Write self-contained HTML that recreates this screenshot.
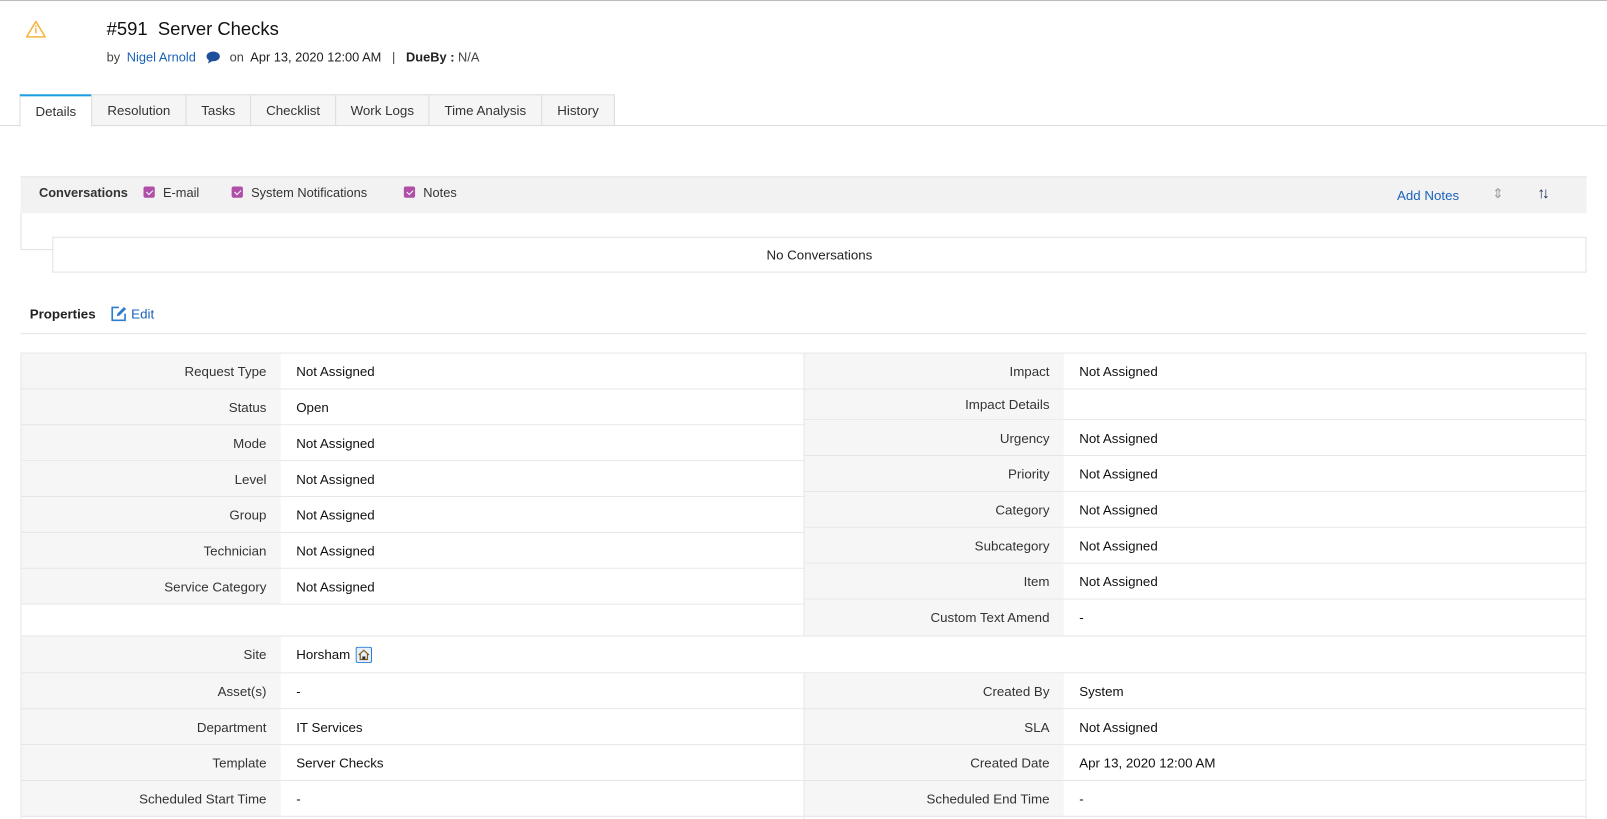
<!DOCTYPE html>
<html><head><meta charset="utf-8"><style>
*{margin:0;padding:0;box-sizing:border-box}
body{width:1607px;height:799px;overflow:hidden;background:#fff;font-family:"Liberation Sans",Arial,sans-serif;font-size:13px;color:#333;position:relative}
#w{position:absolute;left:0;top:0;width:1568px;height:780px;transform:scale(1.0249);transform-origin:0 0}
.a{position:absolute}
.lab{position:absolute;background:#f6f6f6;text-align:right;padding-right:14px;color:#333;border-bottom:1px solid #e6e6e6;display:flex;align-items:center;justify-content:flex-end}
.val{position:absolute;background:#fff;padding-left:15px;color:#111;border-bottom:1px solid #e6e6e6;display:flex;align-items:center}
.tab{position:absolute;top:92px;height:31px;border:1px solid #ddd;background:#f5f5f5;color:#333;font-size:13px;display:flex;align-items:center;justify-content:center}
.cb{display:inline-block;width:11px;height:11px;background:#b04fa8;border-radius:2px;vertical-align:-1px;margin-right:8px;position:relative}
.cb:after{content:"";position:absolute;left:3.5px;top:1.5px;width:3px;height:5px;border:solid #fff;border-width:0 1.3px 1.3px 0;transform:rotate(45deg)}
</style></head><body><div id="w">
<div class="a" style="left:0;top:0;width:1607px;height:1px;background:#bbb"></div>
<svg class="a" style="left:24px;top:19px" width="22" height="19" viewBox="0 0 22 19"><path d="M11 2 L20 17 L2 17 Z" fill="none" stroke="#f7b23b" stroke-width="1.5" stroke-linejoin="round"/><line x1="11" y1="8.5" x2="11" y2="13.5" stroke="#f7b23b" stroke-width="1.5"/><circle cx="11" cy="6.5" r="0.9" fill="#f7b23b"/></svg>
<div class="a" style="left:104px;top:18px;font-size:18px;color:#111">#591&nbsp; Server Checks</div>
<div class="a" style="left:104px;top:49px;font-size:12.5px;color:#444">by <span style="color:#1a63b8;margin-left:3px">Nigel Arnold</span>
<svg width="14" height="12" viewBox="0 0 14 12" style="vertical-align:-2px;margin:0 6px 0 6px"><ellipse cx="7" cy="5" rx="6.5" ry="4.8" fill="#1e4f9a"/><path d="M3 8 L2 12 L7 9Z" fill="#1e4f9a"/></svg> on&nbsp; <span style="color:#222">Apr 13, 2020 12:00 AM</span> &nbsp; | &nbsp; <b style="color:#222">DueBy :</b> N/A</div>
<div class="a" style="left:0;top:122px;width:1607px;height:1px;background:#ddd"></div>
<div class="tab" style="left:19px;width:71px;background:#fff;border-top:2px solid #1a9de0;border-bottom:1px solid #fff;height:32px">Details</div>
<div class="tab" style="left:89px;width:93px">Resolution</div>
<div class="tab" style="left:181px;width:64px">Tasks</div>
<div class="tab" style="left:244px;width:84px">Checklist</div>
<div class="tab" style="left:327px;width:92px">Work Logs</div>
<div class="tab" style="left:418px;width:111px">Time Analysis</div>
<div class="tab" style="left:528px;width:72px">History</div>

<div class="a" style="left:20px;top:172px;width:1528px;height:36px;background:#f2f2f2;border-top:1px solid #e4e4e4"></div>
<div class="a" style="left:38px;top:181px;font-weight:bold;color:#333;font-size:12.5px">Conversations</div>
<div class="a" style="left:140px;top:181px;font-size:12.5px"><span class="cb"></span>E-mail</div>
<div class="a" style="left:226px;top:181px;font-size:12.5px"><span class="cb"></span>System Notifications</div>
<div class="a" style="left:394px;top:181px;font-size:12.5px"><span class="cb"></span>Notes</div>
<div class="a" style="left:1363px;top:183px;color:#1a63b8;font-size:13px">Add Notes</div>
<div class="a" style="left:1456px;top:181px;color:#999;font-size:13px">⇕</div>
<div class="a" style="left:1500px;top:180px;color:#1e2a60;font-size:15px">↑<span style="margin-left:-3px">↓</span></div>
<div class="a" style="left:20px;top:208px;width:32px;border-left:1px solid #e2e2e2;border-bottom:1px solid #e2e2e2;height:36px"></div>
<div class="a" style="left:51px;top:231px;width:1497px;height:35px;border:1px solid #e2e2e2;display:flex;align-items:center;justify-content:center;color:#222">No Conversations</div>

<div class="a" style="left:29px;top:299px;font-weight:bold;color:#222">Properties</div>
<svg class="a" style="left:108px;top:298px" width="16" height="16" viewBox="0 0 16 16"><path d="M8 2H1.5V14.5H14V8" fill="none" stroke="#2b7dd1" stroke-width="1.6"/><path d="M6 10.5L6.5 8 13 1.5 15 3.5 8.5 10Z" fill="#2b7dd1"/></svg>
<div class="a" style="left:128px;top:299px;color:#1a63b8">Edit</div>
<div class="a" style="left:20px;top:325px;width:1528px;height:1px;background:#e6e6e6"></div>

<div class="a" style="left:20px;top:344px;width:1528px;height:455px;border:1px solid #e6e6e6;border-bottom:none"></div>

<div class="lab" style="left:21px;top:345px;width:253px;height:35px">Request Type</div><div class="val" style="left:274px;top:345px;width:510px;height:35px">Not Assigned</div>
<div class="lab" style="left:21px;top:380px;width:253px;height:35px">Status</div><div class="val" style="left:274px;top:380px;width:510px;height:35px">Open</div>
<div class="lab" style="left:21px;top:415px;width:253px;height:35px">Mode</div><div class="val" style="left:274px;top:415px;width:510px;height:35px">Not Assigned</div>
<div class="lab" style="left:21px;top:450px;width:253px;height:35px">Level</div><div class="val" style="left:274px;top:450px;width:510px;height:35px">Not Assigned</div>
<div class="lab" style="left:21px;top:485px;width:253px;height:35px">Group</div><div class="val" style="left:274px;top:485px;width:510px;height:35px">Not Assigned</div>
<div class="lab" style="left:21px;top:520px;width:253px;height:35px">Technician</div><div class="val" style="left:274px;top:520px;width:510px;height:35px">Not Assigned</div>
<div class="lab" style="left:21px;top:555px;width:253px;height:35px">Service Category</div><div class="val" style="left:274px;top:555px;width:510px;height:35px">Not Assigned</div>
<div class="val" style="left:21px;top:590px;width:763px;height:31px"></div>

<div class="a" style="left:784px;top:345px;width:1px;height:276px;background:#e6e6e6"></div>
<div class="lab" style="left:785px;top:345px;width:253px;height:35px">Impact</div><div class="val" style="left:1038px;top:345px;width:509px;height:35px">Not Assigned</div>
<div class="lab" style="left:785px;top:380px;width:253px;height:30px">Impact Details</div><div class="val" style="left:1038px;top:380px;width:509px;height:30px"></div>
<div class="lab" style="left:785px;top:410px;width:253px;height:35px">Urgency</div><div class="val" style="left:1038px;top:410px;width:509px;height:35px">Not Assigned</div>
<div class="lab" style="left:785px;top:445px;width:253px;height:35px">Priority</div><div class="val" style="left:1038px;top:445px;width:509px;height:35px">Not Assigned</div>
<div class="lab" style="left:785px;top:480px;width:253px;height:35px">Category</div><div class="val" style="left:1038px;top:480px;width:509px;height:35px">Not Assigned</div>
<div class="lab" style="left:785px;top:515px;width:253px;height:35px">Subcategory</div><div class="val" style="left:1038px;top:515px;width:509px;height:35px">Not Assigned</div>
<div class="lab" style="left:785px;top:550px;width:253px;height:35px">Item</div><div class="val" style="left:1038px;top:550px;width:509px;height:35px">Not Assigned</div>
<div class="lab" style="left:785px;top:585px;width:253px;height:36px">Custom Text Amend</div><div class="val" style="left:1038px;top:585px;width:509px;height:36px">-</div>

<div class="lab" style="left:21px;top:621px;width:253px;height:36px">Site</div><div class="val" style="left:274px;top:621px;width:1273px;height:36px">Horsham <svg width="16" height="16" viewBox="0 0 16 16" style="margin-left:5px"><rect x="0.5" y="0.5" width="15" height="15" rx="1.5" fill="#e6f0fa" stroke="#2b7dd1"/><path d="M3 8L8 3.5 13 8M4.5 7V12.5H11.5V7" fill="none" stroke="#8a5a1a" stroke-width="1.2"/><rect x="6.5" y="9.5" width="3" height="3" fill="#333"/></svg></div>
<div class="lab" style="left:21px;top:657px;width:253px;height:35px">Asset(s)</div><div class="val" style="left:274px;top:657px;width:510px;height:35px">-</div>
<div class="lab" style="left:21px;top:692px;width:253px;height:35px">Department</div><div class="val" style="left:274px;top:692px;width:510px;height:35px">IT Services</div>
<div class="lab" style="left:21px;top:727px;width:253px;height:35px">Template</div><div class="val" style="left:274px;top:727px;width:510px;height:35px">Server Checks</div>
<div class="lab" style="left:21px;top:762px;width:253px;height:35px">Scheduled Start Time</div><div class="val" style="left:274px;top:762px;width:510px;height:35px">-</div>
<div class="a" style="left:784px;top:657px;width:1px;height:142px;background:#e6e6e6"></div>
<div class="lab" style="left:785px;top:657px;width:253px;height:35px">Created By</div><div class="val" style="left:1038px;top:657px;width:509px;height:35px">System</div>
<div class="lab" style="left:785px;top:692px;width:253px;height:35px">SLA</div><div class="val" style="left:1038px;top:692px;width:509px;height:35px">Not Assigned</div>
<div class="lab" style="left:785px;top:727px;width:253px;height:35px">Created Date</div><div class="val" style="left:1038px;top:727px;width:509px;height:35px">Apr 13, 2020 12:00 AM</div>
<div class="lab" style="left:785px;top:762px;width:253px;height:35px">Scheduled End Time</div><div class="val" style="left:1038px;top:762px;width:509px;height:35px">-</div>
</div></body></html>
